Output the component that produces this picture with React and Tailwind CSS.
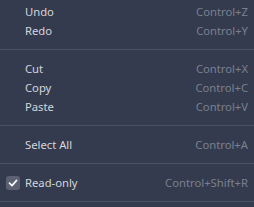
import React from "react";

const items = [
  { label: "Undo", sc: "Control+Z" },
  { label: "Redo", sc: "Control+Y" },
  { sep: true },
  { label: "Cut", sc: "Control+X" },
  { label: "Copy", sc: "Control+C" },
  { label: "Paste", sc: "Control+V" },
  { sep: true },
  { label: "Select All", sc: "Control+A" },
  { sep: true },
  { label: "Read-only", sc: "Control+Shift+R", check: true },
  { sep: true },
];

export default function App() {
  return (
    <div
      className="w-[254px] h-[207px] overflow-hidden bg-[#343b4e] pt-[2px]"
      style={{ fontFamily: '"Noto Sans", "Open Sans", sans-serif' }}
    >
      {items.map((it, i) =>
        it.sep ? (
          <div key={i} className="h-[19px] flex items-center">
            <div className="h-px w-full bg-[#4a5164]" />
          </div>
        ) : (
          <div key={i} className="h-[19px] flex items-center pr-[6px] text-[11.25px] leading-none">
            <div className="w-[25px] flex justify-start pl-[6px]">
              {it.check && (
                <div className="w-[14px] h-[14px] rounded-[3px] bg-[#5b6172] flex items-center justify-center">
                  <svg width="10" height="10" viewBox="0 0 10 10">
                    <path d="M1.5 5.2 L4 7.6 L8.6 2.4" fill="none" stroke="#f2f3f5" strokeWidth="1.8" strokeLinecap="round" strokeLinejoin="round" />
                  </svg>
                </div>
              )}
            </div>
            <span className="text-[#d3d6dc] pt-[1px]">{it.label}</span>
            <span className="ml-auto text-[#7a8090] pt-[1px]">{it.sc}</span>
          </div>
        )
      )}
    </div>
  );
}
